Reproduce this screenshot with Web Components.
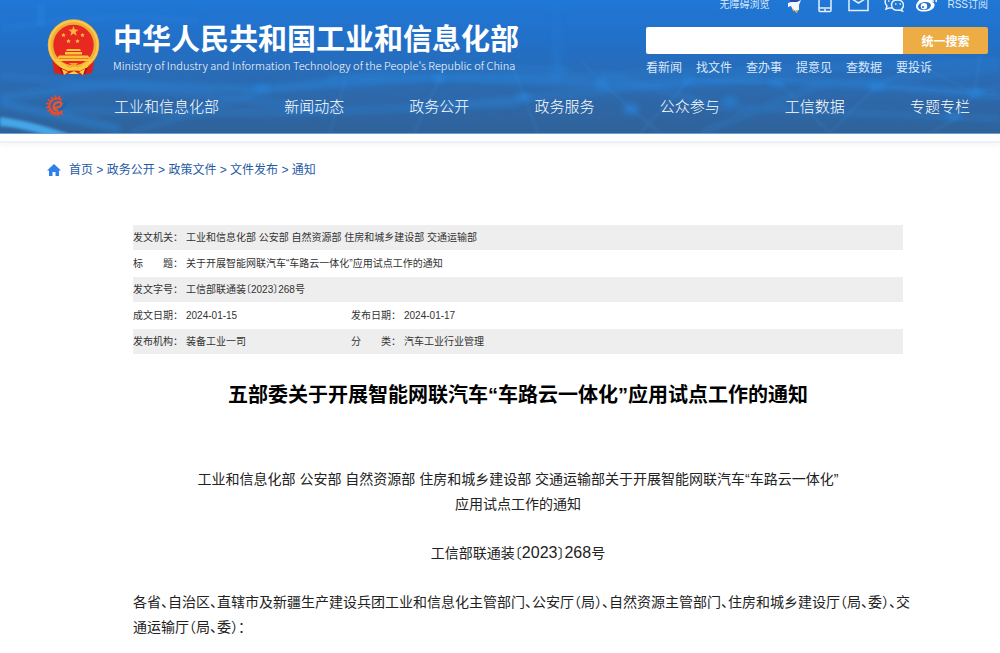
<!DOCTYPE html>
<html lang="zh-CN">
<head>
<meta charset="utf-8">
<meta name="viewport" content="width=device-width, initial-scale=1">
<title>五部委关于开展智能网联汽车“车路云一体化”应用试点工作的通知</title>
<style>
body { margin: 0; background: #fff; color: #333; font-family: "Liberation Sans", "Noto Sans CJK SC", sans-serif; }
</style>
</head>
<body>
<site-header>
  <site-brand slot="brand"></site-brand>
  <site-tools slot="tools"></site-tools>
  <site-nav slot="nav"></site-nav>
</site-header>
<main>
  <bread-crumb></bread-crumb>
  <doc-meta></doc-meta>
  <doc-article>
    <span slot="title">五部委关于开展智能网联汽车“车路云一体化”应用试点工作的通知</span>
  </doc-article>
</main>
<script>
function define(name, html) {
  const template = document.createElement('template');
  template.innerHTML = html;
  customElements.define(name, class extends HTMLElement {
    constructor() {
      super();
      this.attachShadow({ mode: 'open' }).append(template.content.cloneNode(true));
    }
  });
}

define('site-header', `
<style>
:host { display: block; padding-bottom: 7px; border-bottom: 2px solid #edf1f5; box-shadow: 0 3px 5px #f5f8fb; }
header { position: relative; overflow: hidden; background: linear-gradient(#2077d6 0, #226fc6 45px, #2d69ad 90px, #306299 134px); color: #fff; border-bottom: 1px solid #6f9dce; box-sizing: border-box; }
.backdrop { position: absolute; inset: 0; width: 100%; height: 100%; }
.inner { position: relative; padding: 0 12px 2px 45px; }
.top { display: flex; justify-content: space-between; gap: 20px; height: 80px; }
</style>
<header>
  <svg class="backdrop" viewBox="0 0 1000 134" preserveAspectRatio="none" aria-hidden="true">
    <defs>
      <filter id="soft" x="-50%" y="-50%" width="200%" height="200%"><feGaussianBlur stdDeviation="3"/></filter>
      <filter id="fine" x="-50%" y="-50%" width="200%" height="200%"><feGaussianBlur stdDeviation="1.500"/></filter>
      <linearGradient id="beam" x1="0" x2="0" y1="0" y2="1"><stop offset="0" stop-color="#2787e5" stop-opacity="0"/><stop offset="1" stop-color="#2787e5"/></linearGradient>
    </defs>
    <g fill="none" stroke="#2787df" filter="url(#soft)">
      <path opacity=".6" stroke-width="5" d="M0 98L120 84 260 90 440 78 610 85 780 80 900 88 1000 96"/>
      <path opacity=".5" stroke-width="4" d="M60 110Q300 120 480 103T760 78M330 78L600 76 1000 62M0 76L200 95 340 112 520 104"/>
      <path opacity=".4" stroke-width="4" d="M0 30Q100 10 200 22M130 134L260 92 420 66 570 70M700 134L820 86 1000 70M600 74L720 108 1000 120"/>
      <path opacity=".6" stroke-width="6" d="M0 104L120 130"/>
    </g>
    <g fill="none" stroke="#3c8bdc" stroke-width="2" opacity=".25" filter="url(#fine)">
      <path d="M346 78L330 134M440 78L414 134M510 60L538 134M580 60L602 84 632 110 660 134M690 80L640 134M690 80L780 84 830 134M876 87L830 134M876 87L975 94 955 120 930 134M980 55L975 94M876 87L920 66 975 94 1000 86"/>
    </g>
    <rect x="552" width="10" height="82" fill="url(#beam)" opacity=".3" filter="url(#soft)"/>
    <rect x="37" y="4" width="8" height="22" fill="#2a86df" opacity=".35" filter="url(#fine)"/>
    <g fill="#2889e4" opacity=".65" filter="url(#soft)">
      <ellipse cx="262" cy="89" rx="8" ry="3"/><ellipse cx="439" cy="79" rx="6" ry="4"/><ellipse cx="524" cy="98" rx="8" ry="4"/><ellipse cx="602" cy="84" rx="6" ry="4"/><ellipse cx="631" cy="110" rx="8" ry="5"/><ellipse cx="688" cy="80" rx="6" ry="3"/><ellipse cx="777" cy="84" rx="8" ry="3"/><ellipse cx="876" cy="87" rx="8" ry="4"/><ellipse cx="976" cy="93" rx="7" ry="4"/><ellipse cx="730" cy="102" rx="8" ry="4"/><ellipse cx="953" cy="117" rx="8" ry="3"/>
    </g>
    <path d="M0 118Q32 122 74 137L48 137Q24 129 0 127Z" fill="#46aef0" opacity=".9" filter="url(#fine)"/>
  </svg>
  <div class="inner">
    <div class="top"><slot name="brand"></slot><slot name="tools"></slot></div>
    <slot name="nav"></slot>
  </div>
</header>`);

define('site-brand', `
<style>
:host { display: block; white-space: nowrap; }
a { display: flex; gap: 12px; padding-top: 18px; color: #fff; text-decoration: none; }
svg { display: block; width: 56px; height: 58px; flex: none; }
.words { display: flex; flex-direction: column; padding-top: 4px; }
strong { font-size: 29px; line-height: 36px; font-weight: 700; }
small { font: 300 11px/14px "Noto Sans CJK SC", sans-serif; }
</style>
<a href="#">
  <svg viewBox="0 0 56 58" aria-hidden="true">
    <path d="M7 38L9 55 19 57 28 54 37 57 47 55 50 38Z" fill="#dd2019"/>
    <path d="M12 42L18 56M45 42L39 56" stroke="#a81718" stroke-width="2"/>
    <circle cx="28.500" cy="27" r="23" fill="#e72922" stroke="#edb035" stroke-width="5.500"/>
    <circle cx="28.500" cy="27" r="24" fill="none" stroke="#fbc94f" stroke-width="2"/>
    <path d="M28.500 8l1.300 3.600 3.800.1-3 2.300 1 3.700-3.100-2.200-3.100 2.200 1-3.700-3-2.300 3.800-.1z" fill="#ffb53f"/>
    <g fill="#ffc53c">
      <path id="s" d="M18.500 15l.7 1.300 1.500.2-1.100 1 .3 1.500-1.400-.7-1.400.7.300-1.500-1.100-1 1.500-.2z"/>
      <use href="#s" x="19"/><use href="#s" x="5" y="6"/><use href="#s" x="14" y="6"/>
      <path d="M22 31h13l1 2H21zM20 34h17v2.500H20zM14 37.500h29l2 3H12zM11 41h35v2H11z"/>
    </g>
    <path d="M13 43l7 3 4 5 5-3 5 3 4-5 7-3-2 6-8 4-6-1-6 1-8-4z" fill="#ffc93f"/>
    <path d="M17 51l6 3-4 3M40 51l-6 3 4 3M23 56l6-3 5 3" fill="#ffcc45"/>
    <path d="M24 45h9l-4 4z" fill="#f3a52b"/>
  </svg>
  <span class="words"><strong>中华人民共和国工业和信息化部</strong><small lang="en">Ministry of Industry and Information Technology of the People's Republic of China</small></span>
</a>`);

define('site-tools', `
<style>
:host { display: block; width: 342px; flex: none; }
a { color: #d9e8fa; text-decoration: none; }
.utils { display: flex; align-items: center; justify-content: flex-end; height: 22px; margin-top: -8px; font-size: 10px; }
.utils a { display: flex; }
.utils svg { display: block; height: 22px; }
.mascot { margin-left: 17px; } .phone { margin-left: 16px; } .mail { margin-left: 16px; } .wechat { margin-left: 15px; } .weibo { margin-left: 11px; } .rss { margin-left: 9px; }
form { display: flex; height: 27px; margin: 13px 0 0; border-radius: 2px; overflow: hidden; }
input { flex: 1; min-width: 0; border: 0; padding: 0 8px; background: #fff; outline: 0; }
button { width: 85px; border: 0; padding: 0; background: #eeac45; color: #fff; font: bold 12px/27px "Noto Sans CJK SC", sans-serif; }
nav { display: flex; gap: 14px; font: 12px/18px "Noto Sans CJK SC", sans-serif; padding-top: 4px; }
</style>
<div class="utils">
  <a href="#">无障碍浏览</a>
  <a class="mascot" href="#" aria-label="智能问答"><svg width="16" viewBox="0 0 16 22"><path d="M4 3h9l1 7H4z" fill="#2947b0"/><path d="M2 11l3-1h6l4-2-2 5 0 5-3 1-3-1-2-4-3 1z" fill="#f4f7ff"/><path d="M6 17l2 0v3zM10 18l2 0-1 3-2-1zM13 8l1-2 1 2z" fill="#ecb43e"/></svg></a>
  <a class="phone" href="#" aria-label="手机版"><svg width="14" viewBox="0 0 14 22" fill="none" stroke="#e4effc" stroke-width="1.500"><rect x="1" y="1" width="12" height="18.500" rx="1"/><path d="M1 16h12M6 18h2"/></svg></a>
  <a class="mail" href="#" aria-label="邮箱"><svg width="21" viewBox="0 0 21 22" fill="none" stroke="#e4effc" stroke-width="1.500"><rect x="1" y="4" width="19" height="14.500"/><path d="M4 7l6.500 4L17 7"/></svg></a>
  <a class="wechat" href="#" aria-label="微信"><svg width="20" viewBox="0 0 20 22" fill="none" stroke="#e4effc" stroke-width="1.500"><path d="M8 16l-3 0-3 1 1-3C-1 10 2 4 8 4q5 0 6 4"/><path d="M13.500 8c7 0 7 7 4 9l1 2-3-1c-5 1-8-1-8-5s3-5 6-5z"/><path d="M11 12h1.500M15.500 12h1.500M4 9h1.500"/></svg></a>
  <a class="weibo" href="#" aria-label="微博"><svg width="23" viewBox="0 0 23 22"><path d="M1 14c0-4 6-9 9-9 2 0 2 2 1.500 3 3-1 6-1 5.500 2 5 1 3 9-7 9.500C5 20 1 18 1 14z" fill="#fff"/><ellipse cx="9.500" cy="14" rx="6.500" ry="4" transform="rotate(-8 9.500 14)" fill="#2472c9"/><circle cx="9" cy="14.200" r="3.200" fill="#fff"/><circle cx="8" cy="15" r="1.100" fill="#2472c9"/><path d="M15 3c5-1 7 3 6 7M15 6c3 0 3 1 3 4" fill="none" stroke="#fff" stroke-width="1.500"/></svg></a>
  <a class="rss" href="#">RSS订阅</a>
</div>
<form><input type="search" aria-label="搜索"><button type="button">统一搜索</button></form>
<nav aria-label="快捷入口"><a href="#">看新闻</a><a href="#">找文件</a><a href="#">查办事</a><a href="#">提意见</a><a href="#">查数据</a><a href="#">要投诉</a></nav>`);

define('site-nav', `
<style>
:host { display: block; font: 300 15px/24px "Noto Sans CJK SC", sans-serif; }
nav { display: flex; align-items: center; height: 51px; white-space: nowrap; }
a { color: #fff; text-decoration: none; }
.items { display: flex; flex: 1; justify-content: space-between; padding: 0 18px 0 45px; }
svg { display: block; width: 24px; height: 24px; }
</style>
<nav aria-label="主导航">
  <a href="#" aria-label="工信首页"><svg viewBox="0 0 24 24" fill="none"><path d="M17.500 19.500A9.600 9.600 0 1 1 17 4" stroke="#ea4a2c" stroke-width="2" stroke-dasharray="1.800 2"/><path d="M17.500 17A7.600 7.600 0 1 1 16.500 6" stroke="#f04b26" stroke-width="2.400"/><path d="M12 17c6 0 9-4 11.500-10-1 1-2 1.500-4 1.500C18 12 15 15 11 15z" fill="#1c68b0"/><path d="M8 13.500c5 1 8.500-1 8.500-3.500 0-3-6-2.500-7.500 1-1.500 4 1 6 4.500 5.500" stroke="#f35327" stroke-width="2.200"/></svg></a>
  <div class="items"><a href="#">工业和信息化部</a><a href="#">新闻动态</a><a href="#">政务公开</a><a href="#">政务服务</a><a href="#">公众参与</a><a href="#">工信数据</a><a href="#">专题专栏</a></div>
</nav>`);

define('bread-crumb', `
<style>
:host { display: block; padding: 17px 47px 0; font-size: 12px; line-height: 20px; color: #1f5ba5; }
nav { display: flex; align-items: center; gap: 8px; }
svg { display: block; width: 14px; height: 12px; }
a { color: inherit; text-decoration: none; }
</style>
<nav aria-label="当前位置"><svg viewBox="0 0 14 12" aria-hidden="true"><path d="M7 0L14 6.500H12V12H8.500V8H5.500V12H2V6.500H0Z" fill="#2f80ed"/></svg><span><a href="#">首页</a> &gt; <a href="#">政务公开</a> &gt; <a href="#">政策文件</a> &gt; <a href="#">文件发布</a> &gt; <a href="#">通知</a></span></nav>`);

define('doc-meta', `
<style>
:host { display: block; padding: 45px 97px 0 133px; font-size: 10px; font-feature-settings: "halt"; }
table { width: 100%; border-collapse: collapse; table-layout: fixed; }
tr { border-bottom: 1px solid #fff; }
tr:nth-child(odd) { background: #eee; }
th, td { height: 25px; padding: 0; line-height: 25px; text-align: left; font-weight: 400; white-space: nowrap; }
.label { width: 53px; } .value { width: 165px; }
.split span { display: inline-block; width: 30px; }
</style>
<table>
  <colgroup><col class="label"><col class="value"><col class="label"><col></colgroup>
  <tbody>
  <tr><th scope="row">发文机关：</th><td colspan="3">工业和信息化部 公安部 自然资源部 住房和城乡建设部 交通运输部</td></tr>
  <tr><th scope="row" class="split"><span>标</span>题：</th><td colspan="3">关于开展智能网联汽车“车路云一体化”应用试点工作的通知</td></tr>
  <tr><th scope="row">发文字号：</th><td colspan="3">工信部联通装〔2023〕268号</td></tr>
  <tr><th scope="row">成文日期：</th><td>2024-01-15</td><th scope="row">发布日期：</th><td>2024-01-17</td></tr>
  <tr><th scope="row">发布机构：</th><td>装备工业一司</td><th scope="row" class="split"><span>分</span>类：</th><td>汽车工业行业管理</td></tr>
  </tbody>
</table>`);

define('doc-article', `
<style>
:host { display: block; padding: 25px 97px 10px 133px; color: #222; font-size: 14px; line-height: 25px; font-feature-settings: "halt"; }
h1 { margin: 0 0 57px; color: #000; font-size: 20px; line-height: 30px; text-align: center; }
p { margin: 0 0 24px; white-space: nowrap; }
.center { text-align: center; }
.number { font-size: 16px; line-height: 16px; }
</style>
<article>
  <h1><slot name="title"></slot></h1>
  <p class="center">工业和信息化部 公安部 自然资源部 住房和城乡建设部 交通运输部关于开展智能网联汽车“车路云一体化”<br>应用试点工作的通知</p>
  <p class="center">工信部联通装〔<span class="number">2023</span>〕<span class="number">268</span>号</p>
  <p>各省、自治区、直辖市及新疆生产建设兵团工业和信息化主管部门、公安厅（局）、自然资源主管部门、住房和城乡建设厅（局、委）、交<br>通运输厅（局、委）：</p>
</article>`);
</script>
</body>
</html>
